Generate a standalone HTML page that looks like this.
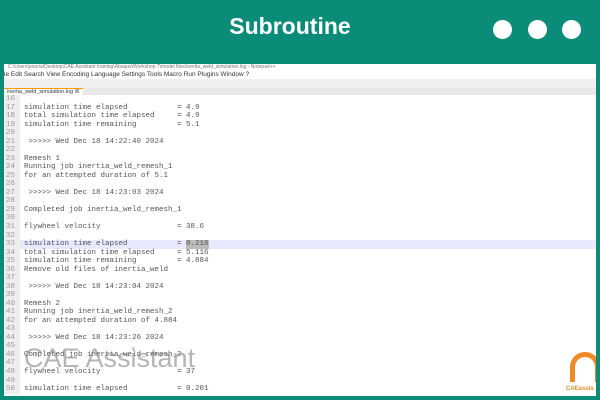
<!DOCTYPE html><html><head><style>
body{margin:0;width:600px;height:400px;background:#0b8c79;position:relative;overflow:hidden;font-family:"Liberation Sans",sans-serif}
.hdr{position:absolute;left:0;top:0;width:600px;height:64px;background:#0b8c79;border-top-right-radius:30px}
.t{position:absolute;left:0;width:580px;top:13px;text-align:center;color:#fff;font-weight:bold;font-size:23px}
.d{position:absolute;top:20px;width:19px;height:19px;border-radius:50%;background:#fff}
.win{position:absolute;left:4px;top:64px;width:592px;height:332px;background:#fff;overflow:hidden}
.tb{position:absolute;left:0;width:592px;font-size:6.5px;color:#333}
.ed{position:absolute;left:0;top:31px;width:592px;font-family:"Liberation Mono",monospace;font-size:7.5px;line-height:8.53px;color:#555}
.ln{display:flex;white-space:pre}
.n{width:14px;background:#eee;color:#999;padding-left:2px;margin-right:4px}
.hl{background:#e8e8ff}
</style></head><body>
<div class="hdr"></div>
<div class="t">Subroutine</div>
<div class="d" style="left:493px"></div><div class="d" style="left:528px"></div><div class="d" style="left:562px"></div>
<div class="win">
<div class="tb" style="top:0;height:6px;color:#777;font-size:5px;line-height:6px;padding-left:4px">C:\Users\pooria\Desktop\CAE Assistant training\Abaqus\Workshop 7\model files\inertia_weld_simulation.log - Notepad++</div>
<div class="tb" style="top:6px;height:9px;line-height:9px;padding-left:0">le  Edit  Search  View  Encoding  Language  Settings  Tools  Macro  Run  Plugins  Window  ?</div>
<div class="tb" style="top:15px;height:9px;background:#f0f0f0"></div>
<div class="tb" style="top:24px;height:7px;line-height:7px;background:#e8e8e8"><span style="background:#fff;border-top:1px solid #f90;padding:0 3px;font-size:5.5px">inertia_weld_simulation.log ☒</span></div>
<div class="ed">
<div class="ln"><span class="n">16</span></div>
<div class="ln"><span class="n">17</span>simulation time elapsed           = 4.9</div>
<div class="ln"><span class="n">18</span>total simulation time elapsed     = 4.9</div>
<div class="ln"><span class="n">19</span>simulation time remaining         = 5.1</div>
<div class="ln"><span class="n">20</span></div>
<div class="ln"><span class="n">21</span> &gt;&gt;&gt;&gt;&gt; Wed Dec 18 14:22:40 2024</div>
<div class="ln"><span class="n">22</span></div>
<div class="ln"><span class="n">23</span>Remesh 1</div>
<div class="ln"><span class="n">24</span>Running job inertia_weld_remesh_1</div>
<div class="ln"><span class="n">25</span>for an attempted duration of 5.1</div>
<div class="ln"><span class="n">26</span></div>
<div class="ln"><span class="n">27</span> &gt;&gt;&gt;&gt;&gt; Wed Dec 18 14:23:03 2024</div>
<div class="ln"><span class="n">28</span></div>
<div class="ln"><span class="n">29</span>Completed job inertia_weld_remesh_1</div>
<div class="ln"><span class="n">30</span></div>
<div class="ln"><span class="n">31</span>flywheel velocity                 = 38.6</div>
<div class="ln"><span class="n">32</span></div>
<div class="ln hl"><span class="n">33</span>simulation time elapsed           = <span style="background:#bbb">0.216</span></div>
<div class="ln"><span class="n">34</span>total simulation time elapsed     = 5.116</div>
<div class="ln"><span class="n">35</span>simulation time remaining         = 4.884</div>
<div class="ln"><span class="n">36</span>Remove old files of inertia_weld</div>
<div class="ln"><span class="n">37</span></div>
<div class="ln"><span class="n">38</span> &gt;&gt;&gt;&gt;&gt; Wed Dec 18 14:23:04 2024</div>
<div class="ln"><span class="n">39</span></div>
<div class="ln"><span class="n">40</span>Remesh 2</div>
<div class="ln"><span class="n">41</span>Running job inertia_weld_remesh_2</div>
<div class="ln"><span class="n">42</span>for an attempted duration of 4.884</div>
<div class="ln"><span class="n">43</span></div>
<div class="ln"><span class="n">44</span> &gt;&gt;&gt;&gt;&gt; Wed Dec 18 14:23:26 2024</div>
<div class="ln"><span class="n">45</span></div>
<div class="ln"><span class="n">46</span>Completed job inertia_weld_remesh_2</div>
<div class="ln"><span class="n">47</span></div>
<div class="ln"><span class="n">48</span>flywheel velocity                 = 37</div>
<div class="ln"><span class="n">49</span></div>
<div class="ln"><span class="n">50</span>simulation time elapsed           = 0.201</div>
</div>
<div style="position:absolute;left:20px;top:279px;font-size:27px;color:rgba(120,120,120,0.55)">CAE Assistant</div>
<div style="position:absolute;left:566px;top:288px;width:30px;height:30px;border:5px solid #f08a24;border-bottom:none;border-radius:15px 15px 0 0;box-sizing:border-box"></div>
<div style="position:absolute;left:562px;top:322px;font-size:6px;font-weight:bold;color:#f08a24">CAEassis</div>
</div>
</body></html>
